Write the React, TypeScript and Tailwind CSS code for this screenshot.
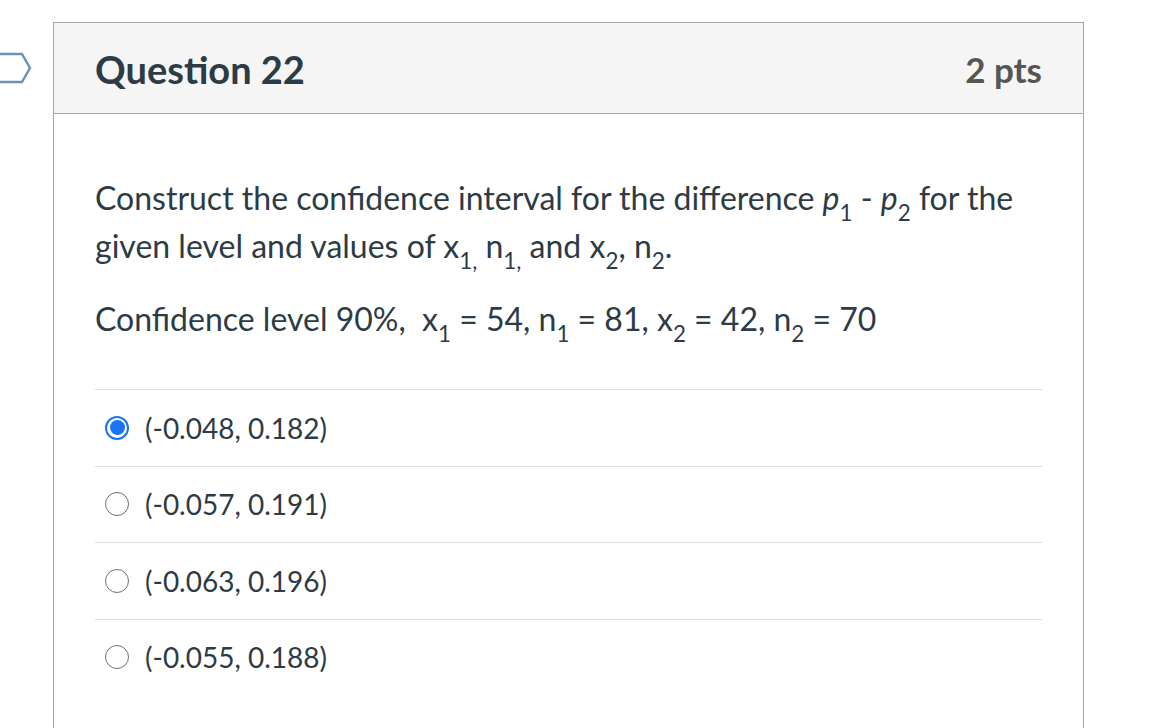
const options = [
  { label: '(-0.048, 0.182)', selected: true },
  { label: '(-0.057, 0.191)', selected: false },
  { label: '(-0.063, 0.196)', selected: false },
  { label: '(-0.055, 0.188)', selected: false },
];

function Sub({ children }: { children: React.ReactNode }) {
  return <sub className="text-[0.7em] align-[-0.25em] leading-none">{children}</sub>;
}

function Radio({ selected }: { selected: boolean }) {
  if (selected) {
    return (
      <span className="w-[24px] h-[24px] rounded-full border-2 border-[#1a73f5] flex items-center justify-center bg-white shrink-0">
        <span className="w-[15px] h-[15px] rounded-full bg-[#1a73f5]" />
      </span>
    );
  }
  return <span className="w-[24px] h-[24px] rounded-full border-[1.5px] border-[#6f6f6f] bg-white shrink-0" />;
}

export default function App() {
  return (
    <div className="w-[1176px] h-[728px] overflow-hidden bg-white text-[#2d3b45] font-['Lato','Liberation_Sans',sans-serif]">
      <div className="flex pt-[22px]">
        <div className="w-[53px] pt-[30px]">
          <svg width="40" height="32" viewBox="0 0 40 32" className="-ml-[4px]">
            <path d="M0 2 H26 L34 16 L26 30 H0" fill="none" stroke="#6a93b3" strokeWidth="2.5" strokeLinejoin="round" />
          </svg>
        </div>
        <div className="w-[1031px] h-[720px] border border-[#a5a5a5] border-b-0">
          <div className="h-[91px] bg-[#f5f5f5] border-b border-[#a5a5a5] flex items-center justify-between pl-[41px] pr-[41px]">
            <h2 className="text-[38px] font-bold text-[#2d3b45] pt-[2px]">Question 22</h2>
            <span className="text-[35px] font-bold text-[#555] pt-[2px]">2 pts</span>
          </div>
          <div className="pl-[41px] pr-[41px] pt-[60px]">
            <p className="text-[32px] leading-[48px]">
              Construct the confidence interval for the difference <i>p</i><Sub>1</Sub> - <i>p</i><Sub>2</Sub> for the given level and values of x<Sub>1,</Sub> n<Sub>1,</Sub> and x<Sub>2</Sub>, n<Sub>2</Sub>.
            </p>
            <p className="text-[32px] leading-[48px] mt-[25px] whitespace-pre">
              Confidence level 90%,  x<Sub>1</Sub> = 54, n<Sub>1</Sub> = 81, x<Sub>2</Sub> = 42, n<Sub>2</Sub> = 70
            </p>
            <div className="mt-[46px]">
              {options.map((o) => (
                <div key={o.label} className="h-[76.5px] border-t border-[#dcdcdc] flex items-center gap-[16px] pl-[10px]">
                  <Radio selected={o.selected} />
                  <span className="text-[28px]">{o.label}</span>
                </div>
              ))}
            </div>
          </div>
        </div>
      </div>
    </div>
  );
}
